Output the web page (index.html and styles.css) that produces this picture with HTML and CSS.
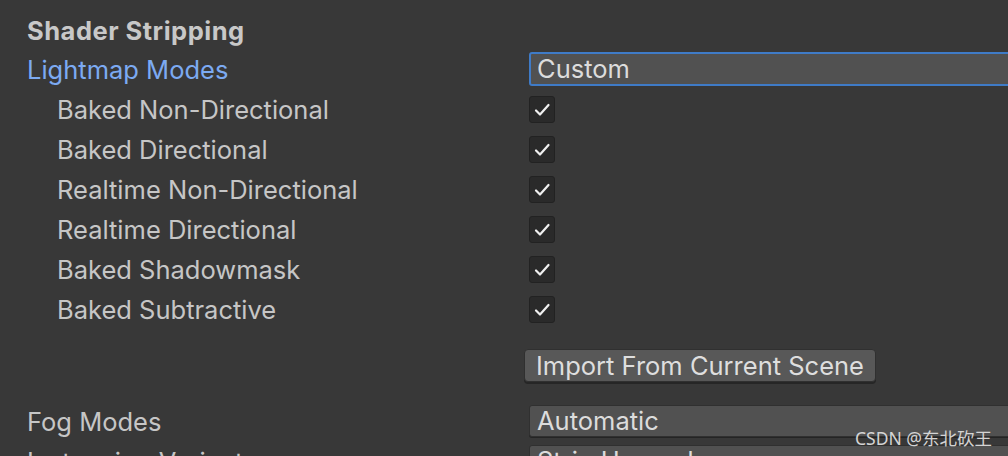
FILE: index.html
```
<!DOCTYPE html>
<html lang="en">
<head>
    <meta charset="UTF-8">
    <meta name="viewport" content="width=device-width, initial-scale=1.0">
    <title>Shader Stripping</title>
    <link rel="stylesheet" href="styles.css">
</head>
<body>
    <div class="panel">
        <div class="title">Shader Stripping</div>

        <div class="row">
            <div class="label active">Lightmap Modes</div>
            <div class="dropdown focused">Custom</div>
        </div>
        <div class="row">
            <div class="label sub">Baked Non-Directional</div>
            <div class="check"><svg viewBox="0 0 26 27" width="26" height="27"><path d="M7 14.5 L11 18.5 L19.5 9" fill="none" stroke="#f0f0f0" stroke-width="2.2" stroke-linecap="round" stroke-linejoin="round"/></svg></div>
        </div>
        <div class="row">
            <div class="label sub">Baked Directional</div>
            <div class="check"><svg viewBox="0 0 26 27" width="26" height="27"><path d="M7 14.5 L11 18.5 L19.5 9" fill="none" stroke="#f0f0f0" stroke-width="2.2" stroke-linecap="round" stroke-linejoin="round"/></svg></div>
        </div>
        <div class="row">
            <div class="label sub">Realtime Non-Directional</div>
            <div class="check"><svg viewBox="0 0 26 27" width="26" height="27"><path d="M7 14.5 L11 18.5 L19.5 9" fill="none" stroke="#f0f0f0" stroke-width="2.2" stroke-linecap="round" stroke-linejoin="round"/></svg></div>
        </div>
        <div class="row">
            <div class="label sub">Realtime Directional</div>
            <div class="check"><svg viewBox="0 0 26 27" width="26" height="27"><path d="M7 14.5 L11 18.5 L19.5 9" fill="none" stroke="#f0f0f0" stroke-width="2.2" stroke-linecap="round" stroke-linejoin="round"/></svg></div>
        </div>
        <div class="row">
            <div class="label sub">Baked Shadowmask</div>
            <div class="check"><svg viewBox="0 0 26 27" width="26" height="27"><path d="M7 14.5 L11 18.5 L19.5 9" fill="none" stroke="#f0f0f0" stroke-width="2.2" stroke-linecap="round" stroke-linejoin="round"/></svg></div>
        </div>
        <div class="row">
            <div class="label sub">Baked Subtractive</div>
            <div class="check"><svg viewBox="0 0 26 27" width="26" height="27"><path d="M7 14.5 L11 18.5 L19.5 9" fill="none" stroke="#f0f0f0" stroke-width="2.2" stroke-linecap="round" stroke-linejoin="round"/></svg></div>
        </div>

        <div class="row button-row">
            <div class="label"></div>
            <button class="btn">Import From Current Scene</button>
        </div>

        <div class="row">
            <div class="label">Fog Modes</div>
            <div class="dropdown">Automatic</div>
        </div>
        <div class="row">
            <div class="label">Instancing Variants</div>
            <div class="dropdown">Strip Unused</div>
        </div>
    </div>
    <div class="watermark">CSDN @东北砍王</div>
</body>
</html>
```
FILE: styles.css
```
*{
    padding: 0;
    margin: 0;
    box-sizing: border-box;
}
body{
    width: 1008px;
    height: 456px;
    overflow: hidden;
    background: #383838;
    font-family: Inter, "Noto Sans", "Noto Sans CJK SC", sans-serif;
    color: #c6c6c6;
    position: relative;
}
.panel{
    padding-top: 11px;
    padding-left: 27px;
}
.title{
    height: 38px;
    line-height: 40px;
    font-size: 25.5px;
    font-weight: 700;
    letter-spacing: 0.5px;
    color: #c8c8c8;
}
.row{
    display: flex;
    align-items: center;
    height: 40px;
}
.label{
    width: 502px;
    flex-shrink: 0;
    font-size: 25.5px;
    white-space: nowrap;
}
.label.sub{
    padding-left: 30px;
}
.label.active{
    color: #7caaf2;
}
.dropdown{
    width: 520px;
    flex-shrink: 0;
    height: 32px;
    line-height: 30px;
    padding-left: 7px;
    font-size: 25.5px;
    color: #dcdcdc;
    background: #515151;
    border: 1px solid #303030;
    border-radius: 3px;
    box-shadow: 0 1px 0 #242424;
}
.dropdown.focused{
    height: 34px;
    border: 2px solid #3f7bc7;
    padding-left: 6px;
    box-shadow: none;
}
.check{
    width: 26px;
    height: 27px;
    background: #2a2a2a;
    border: 1px solid #222;
    border-radius: 3px;
    display: flex;
}
.check svg{
    margin: -1px;
}
.button-row{
    margin: 16px 0;
}
.btn{
    margin-left: -5px;
    width: 352px;
    height: 33px;
    padding-left: 11px;
    text-align: left;
    font-family: inherit;
    font-size: 25.5px;
    color: #dedede;
    background: #585858;
    border: 1px solid #303030;
    border-radius: 4px;
    box-shadow: 0 2px 0 #262626;
}
.watermark{
    position: absolute;
    left: 855px;
    top: 425px;
    font-size: 17.5px;
    color: #d4d4d4;
    font-family: "Noto Sans", "Noto Sans CJK SC", sans-serif;
}
```
